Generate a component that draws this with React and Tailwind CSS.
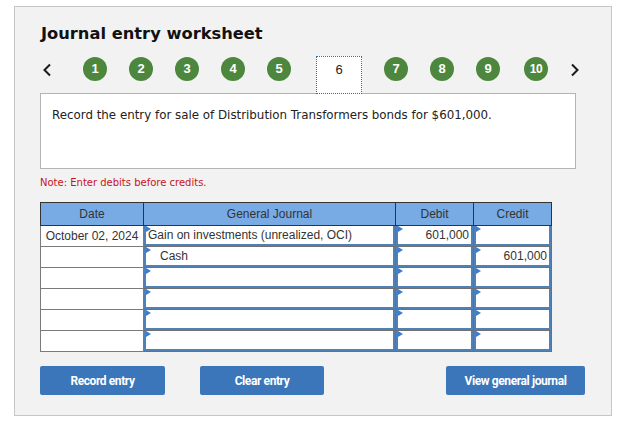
const steps = [1, 2, 3, 4, 5, 6, 7, 8, 9, 10];

const rows = [
  { date: "October 02, 2024", account: "Gain on investments (unrealized, OCI)", indent: false, debit: "601,000", credit: "" },
  { date: "", account: "Cash", indent: true, debit: "", credit: "601,000" },
  { date: "", account: "", indent: false, debit: "", credit: "" },
  { date: "", account: "", indent: false, debit: "", credit: "" },
  { date: "", account: "", indent: false, debit: "", credit: "" },
  { date: "", account: "", indent: false, debit: "", credit: "" },
];

function Chevron({ dir }) {
  return (
    <svg width="10" height="14" viewBox="0 0 10 14" className="mt-[6px]">
      <path
        d={dir === "left" ? "M8 1.5 L2.5 7 L8 12.5" : "M2 1.5 L7.5 7 L2 12.5"}
        fill="none"
        stroke="#1a1a1a"
        strokeWidth="2"
      />
    </svg>
  );
}

function InputCell({ children, align = "left", indent }) {
  return (
    <td className="p-0 border border-[#707070] h-[20px]">
      <div
        className={
          "relative h-[20px] border-x-2 border-b-2 border-[#5080b8] bg-white flex items-center px-[2px] " +
          (align === "right" ? "justify-end" : "justify-start")
        }
      >
        <svg width="5" height="6" viewBox="0 0 5 6" className="absolute left-0 top-0">
          <path d="M0 0 L5 3 L0 6 Z" fill="#3b7dd0" />
        </svg>
        <span className={indent ? "pl-[12px]" : ""}>{children}</span>
      </div>
    </td>
  );
}

export default function App() {
  return (
    <div className="w-[636px] h-[436px] bg-white pt-[6px] pl-[14px]">
      <div className="w-[598px] h-[410px] border border-[#c6c6c6] bg-[#f2f2f2] px-[25px]">
        <h1
          className="pt-[17px] text-[16.3px] leading-[20px] font-bold text-[#111] pl-[1px]"
          style={{ fontFamily: '"DejaVu Sans", Verdana, sans-serif' }}
        >
          Journal entry worksheet
        </h1>

        <div className="mt-[12px] h-[37px] flex items-start gap-[22px]">
          <div className="ml-[2px] mt-[1px]">
            <Chevron dir="left" />
          </div>
          {steps.map((n) =>
            n === 6 ? (
              <div
                key={n}
                className="relative z-10 ml-[3px] w-[46px] h-[38px] bg-white border border-dotted border-[#2f6db5] text-center pt-[3px] text-[13px] text-[#222]"
                style={{ fontFamily: '"Liberation Sans", Arial, sans-serif' }}
              >
                {n}
              </div>
            ) : (
              <div
                key={n}
                className={
                  "mt-[1px] w-[24px] h-[24px] shrink-0 rounded-full bg-[#4d873d] text-white flex items-center justify-center font-bold " +
                  (n === 10 ? "text-[12px] tracking-[-0.5px] ml-[2px]" : "text-[13px]") +
                  (n === 1 ? " ml-[9px]" : "")
                }
                style={{ fontFamily: '"Liberation Sans", Arial, sans-serif' }}
              >
                {n}
              </div>
            )
          )}
          <div className="mt-[1px]">
            <Chevron dir="right" />
          </div>
        </div>

        <div className="w-[536px] h-[76px] border border-[#b4b4b4] bg-white px-[11px] pt-[13px]">
          <p
            className="text-[11.85px] leading-[16px] text-[#222]"
            style={{ fontFamily: '"DejaVu Sans", Verdana, sans-serif' }}
          >
            Record the entry for sale of Distribution Transformers bonds for $601,000.
          </p>
        </div>

        <p
          className="mt-[7px] text-[10px] leading-[14px] text-[#c8141c]"
          style={{ fontFamily: '"DejaVu Sans", Verdana, sans-serif' }}
        >
          Note: Enter debits before credits.
        </p>

        <table
          className="mt-[12px] w-[511px] border-collapse table-fixed text-[12px] text-[#333]"
          style={{ fontFamily: '"Liberation Sans", Arial, sans-serif' }}
        >
          <colgroup>
            <col className="w-[103px]" />
            <col className="w-[252px]" />
            <col className="w-[78px]" />
            <col className="w-[78px]" />
          </colgroup>
          <thead>
            <tr className="bg-[#78aae4] h-[23px]">
              <th className="font-normal border border-[#333] text-center">Date</th>
              <th className="font-normal border border-[#333] text-center">General Journal</th>
              <th className="font-normal border border-[#333] text-center">Debit</th>
              <th className="font-normal border border-[#333] text-center">Credit</th>
            </tr>
          </thead>
          <tbody>
            {rows.map((r, i) => (
              <tr key={i}>
                <td className="border border-[#7a7a7a] bg-white text-center p-0 h-[20px] whitespace-nowrap">{r.date}</td>
                <InputCell indent={r.indent}>{r.account}</InputCell>
                <InputCell align="right">{r.debit}</InputCell>
                <InputCell align="right">{r.credit}</InputCell>
              </tr>
            ))}
          </tbody>
        </table>

        <div
          className="mt-[14px] flex items-start text-white text-[12px] font-bold"
          style={{ fontFamily: 'Roboto, "Liberation Sans", Arial, sans-serif' }}
        >
          <button className="w-[125px] h-[29px] bg-[#3a76b9] rounded-[2px] tracking-[-0.4px]">Record entry</button>
          <button className="ml-[35px] w-[124px] h-[29px] bg-[#3a76b9] rounded-[2px] tracking-[-0.4px]">Clear entry</button>
          <button className="ml-auto mr-[1px] w-[139px] h-[29px] bg-[#3a76b9] rounded-[2px] tracking-[-0.4px]">
            View general journal
          </button>
        </div>
      </div>
    </div>
  );
}
